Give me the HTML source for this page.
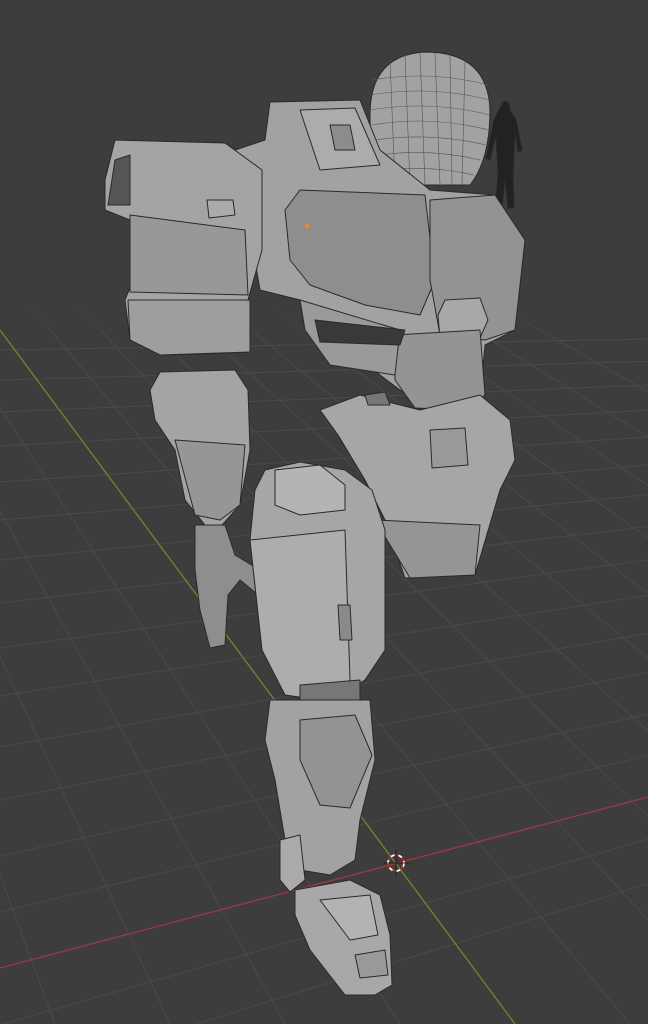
<!DOCTYPE html>
<html><head><meta charset="utf-8"><style>
html,body{margin:0;padding:0;background:#3d3d3d;width:648px;height:1024px;overflow:hidden}
svg{position:absolute;left:0;top:0;display:block}
</style></head><body>
<svg width="648" height="1024" viewBox="0 0 648 1024" xmlns="http://www.w3.org/2000/svg">
<defs><clipPath id="gc"><path d="M0 300 L648 300 L648 1024 L0 1024Z"/></clipPath>
<linearGradient id="fade" x1="0" y1="0" x2="0" y2="1"><stop offset="0" stop-color="#3d3d3d" stop-opacity="1"/><stop offset="1" stop-color="#3d3d3d" stop-opacity="0"/></linearGradient></defs>
<rect width="648" height="1024" fill="#3d3d3d"/>
<g stroke="#4a4a4a" stroke-width="1" fill="none" clip-path="url(#gc)">
<line x1="-400" y1="-209" x2="-500" y2="1024"/>
<line x1="-400" y1="-209" x2="-390" y2="1024"/>
<line x1="-400" y1="-209" x2="-280" y2="1024"/>
<line x1="-400" y1="-209" x2="-170" y2="1024"/>
<line x1="-400" y1="-209" x2="-60" y2="1024"/>
<line x1="-400" y1="-209" x2="55" y2="1024"/>
<line x1="-400" y1="-209" x2="170" y2="1024"/>
<line x1="-400" y1="-209" x2="285" y2="1024"/>
<line x1="-400" y1="-209" x2="400" y2="1024"/>
<line x1="-400" y1="-209" x2="630" y2="1024"/>
<line x1="-400" y1="-209" x2="745" y2="1024"/>
<line x1="-400" y1="-209" x2="860" y2="1024"/>
<line x1="-400" y1="-209" x2="975" y2="1024"/>
<line x1="-400" y1="-209" x2="1090" y2="1024"/>
<line x1="-400" y1="-209" x2="1210" y2="1024"/>
<line x1="-400" y1="-209" x2="1330" y2="1024"/>
<line x1="-400" y1="-209" x2="1460" y2="1024"/>
<line x1="-400" y1="-209" x2="1600" y2="1024"/>
<line x1="-400" y1="-209" x2="1750" y2="1024"/>
<line x1="2500" y1="308" x2="0" y2="350"/>
<line x1="2500" y1="308" x2="0" y2="380"/>
<line x1="2500" y1="308" x2="0" y2="412"/>
<line x1="2500" y1="308" x2="0" y2="446"/>
<line x1="2500" y1="308" x2="0" y2="482"/>
<line x1="2500" y1="308" x2="0" y2="520"/>
<line x1="2500" y1="308" x2="0" y2="560"/>
<line x1="2500" y1="308" x2="0" y2="603"/>
<line x1="2500" y1="308" x2="0" y2="648"/>
<line x1="2500" y1="308" x2="0" y2="696"/>
<line x1="2500" y1="308" x2="0" y2="747"/>
<line x1="2500" y1="308" x2="0" y2="800"/>
<line x1="2500" y1="308" x2="0" y2="856"/>
<line x1="2500" y1="308" x2="0" y2="912"/>
<line x1="2500" y1="308" x2="0" y2="1025"/>
<line x1="2500" y1="308" x2="0" y2="1085"/>
</g>
<rect x="0" y="300" width="648" height="40" fill="url(#fade)"/>
<line x1="0" y1="330" x2="515" y2="1024" stroke="#6b8a2c" stroke-width="1.3"/>
<line x1="0" y1="968" x2="648" y2="797" stroke="#9a3a44" stroke-width="1.3"/>

<g stroke="#2a2a2a" stroke-width="1" stroke-linejoin="round">
<path d="M370 115 Q370 55 425 52 Q488 52 490 110 Q490 160 470 185 L385 185 Q370 160 370 115Z" fill="#a2a2a2"/>
<g stroke="#555" stroke-width="0.6" fill="none">
<path d="M372 80 Q430 70 488 85"/><path d="M370 95 Q430 85 490 100"/><path d="M370 110 Q430 100 490 115"/><path d="M372 125 Q430 115 489 130"/><path d="M375 140 Q430 132 486 145"/><path d="M380 155 Q430 148 480 160"/><path d="M385 170 Q430 165 474 175"/>
<path d="M390 60 L395 185"/><path d="M405 55 L410 185"/><path d="M420 52 L425 185"/><path d="M435 53 L440 185"/><path d="M450 55 L452 185"/><path d="M465 62 L462 185"/>
</g>
<path d="M503 102 Q510 100 510 110 L516 120 L522 150 L518 152 L515 132 L513 175 L514 208 L508 208 L505 178 L502 208 L495 208 L498 175 L496 135 L490 160 L486 158 L494 120 Z" fill="#222"/>
<path d="M235 150 L265 140 L270 102 L360 100 L380 150 L430 190 L495 195 L525 240 L515 330 L485 345 L480 400 L440 410 L400 390 L360 360 L320 340 L300 300 L260 290 L248 220 Z" fill="#a2a2a2"/>
<path d="M285 210 L300 190 L425 195 L435 280 L420 315 L365 305 L310 285 L290 260 Z" fill="#8e8e8e"/>
<path d="M300 110 L355 108 L380 165 L320 170 Z" fill="#acacac"/>
<path d="M330 125 L350 125 L355 150 L335 150 Z" fill="#8c8c8c"/>
<path d="M430 200 L495 195 L525 240 L515 330 L485 340 L440 335 L430 280 Z" fill="#939393"/>
<path d="M445 300 L480 298 L488 320 L480 338 L440 338 L438 315 Z" fill="#a8a8a8"/>
<path d="M395 335 L480 330 L485 395 L465 410 L415 408 L395 380 Z" fill="#949494"/>
<path d="M300 300 L400 330 L395 375 L330 365 L305 330Z" fill="#9a9a9a"/>
<path d="M315 320 L405 330 L400 345 L320 342Z" fill="#3a3838"/>
<path d="M115 140 L225 143 L262 170 L262 250 L248 300 L250 352 L175 355 L130 340 L125 300 L135 275 L130 220 L105 210 L105 180 Z" fill="#a4a4a4"/>
<path d="M130 215 L245 230 L248 295 L130 292 Z" fill="#989898"/>
<path d="M128 300 L250 300 L250 352 L160 355 L130 340 Z" fill="#9e9e9e"/>
<path d="M115 160 L130 155 L130 205 L108 205Z" fill="#555"/>
<path d="M207 200 L233 200 L235 215 L209 218 Z" fill="#ababab"/>
<path d="M320 410 L360 395 L420 410 L480 395 L510 420 L515 460 L500 490 L475 575 L405 578 L385 520 L365 480 L338 435 Z" fill="#a6a6a6"/>
<path d="M375 520 L480 525 L475 575 L410 578 Z" fill="#959595"/>
<path d="M430 430 L465 428 L468 465 L432 468Z" fill="#999"/>
<path d="M365 395 L385 392 L390 405 L368 405Z" fill="#777"/>
<path d="M160 372 L235 370 L248 390 L250 450 L240 505 L222 525 L205 525 L185 500 L175 450 L155 420 L150 390 Z" fill="#a4a4a4"/>
<path d="M175 440 L245 445 L240 505 L220 520 L195 515 Z" fill="#969696"/>
<path d="M195 525 L225 525 L235 555 L260 570 L275 590 L262 598 L240 580 L228 595 L225 645 L210 648 L200 610 L195 570 Z" fill="#8e8e8e"/>
<path d="M265 470 L300 462 L345 470 L372 490 L385 530 L385 650 L365 680 L330 700 L285 695 L262 650 L250 540 L255 490 Z" fill="#a6a6a6"/>
<path d="M275 470 L320 465 L345 485 L345 510 L300 515 L275 505 Z" fill="#b4b4b4"/>
<path d="M250 540 L345 530 L350 680 L320 700 L285 695 L262 650 Z" fill="#adadad"/>
<path d="M338 605 L350 605 L352 640 L340 640Z" fill="#8a8a8a"/>
<path d="M300 685 L360 680 L360 700 L300 705Z" fill="#777"/>
<path d="M270 700 L370 700 L375 760 L360 820 L355 860 L330 875 L300 870 L285 840 L275 780 L265 740 Z" fill="#a2a2a2"/>
<path d="M300 720 L355 715 L372 755 L350 808 L320 805 L300 760 Z" fill="#939393"/>
<path d="M280 840 L300 835 L305 880 L290 892 L280 880Z" fill="#aaa"/>
<path d="M295 890 L350 880 L380 895 L390 935 L392 985 L375 995 L345 995 L310 950 L295 915 Z" fill="#a8a8a8"/>
<path d="M320 900 L370 895 L378 935 L350 940 Z" fill="#b3b3b3"/>
<path d="M355 955 L385 950 L388 975 L360 978Z" fill="#999"/>
</g>
<circle cx="307" cy="226" r="2.2" fill="#f08a10"/>
<circle cx="396" cy="863" r="8" fill="none" stroke="#fff" stroke-width="1.8" stroke-dasharray="4 4"/>
<circle cx="396" cy="863" r="8" fill="none" stroke="#d02020" stroke-width="1.8" stroke-dasharray="4 4" stroke-dashoffset="4"/>
<line x1="396" y1="850" x2="396" y2="876" stroke="#222" stroke-width="1"/>
<line x1="383" y1="863" x2="409" y2="863" stroke="#222" stroke-width="1"/>
</svg>
</body></html>
